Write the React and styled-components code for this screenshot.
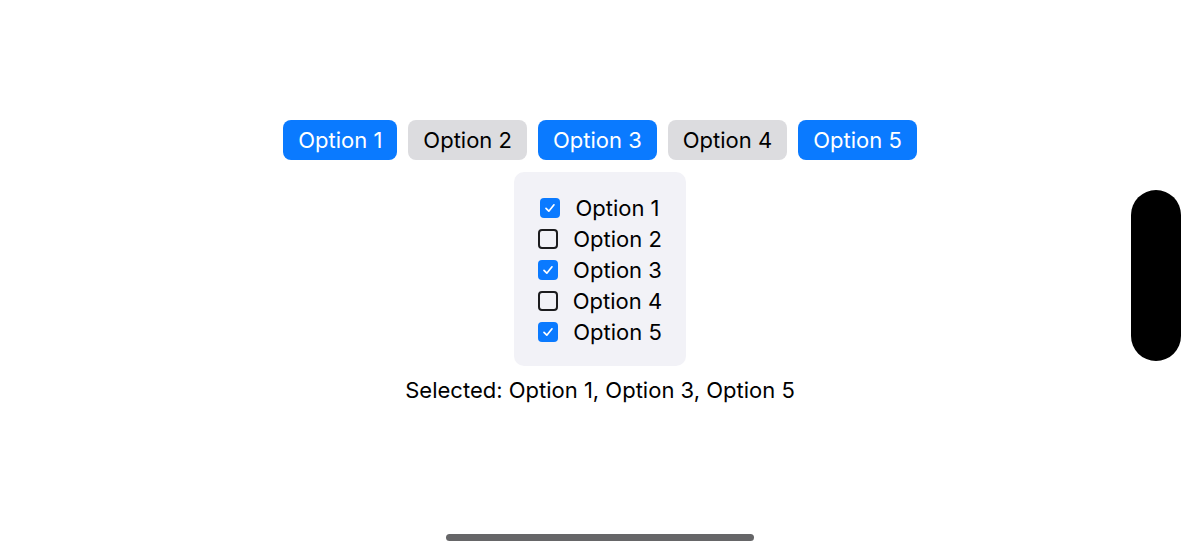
import React, { useState } from 'react';
import styled, { createGlobalStyle } from 'styled-components';

const GlobalStyle = createGlobalStyle`
    html, body {
        margin: 0;
        padding: 0;
        background: #ffffff;
        font-family: Inter, "Liberation Sans", sans-serif;
        -webkit-font-smoothing: antialiased;
    }
`;

const OPTIONS = ['Option 1', 'Option 2', 'Option 3', 'Option 4', 'Option 5'];

const App = () => {
    const [selected, setSelected] = useState(['Option 1', 'Option 3', 'Option 5']);

    const toggle = (opt) => {
        setSelected(prev =>
            prev.includes(opt)
                ? prev.filter(o => o !== opt)
                : OPTIONS.filter(o => o === opt || prev.includes(o))
        );
    };

    return (
        <StyledScreen>
            <GlobalStyle />
            <StyledContent>
                <StyledButtonRow>
                    {OPTIONS.map(opt => (
                        <StyledChip key={opt} active={selected.includes(opt)} onClick={() => toggle(opt)}>
                            {opt}
                        </StyledChip>
                    ))}
                </StyledButtonRow>

                <StyledPanel>
                    {OPTIONS.map(opt => {
                        const checked = selected.includes(opt);
                        return (
                            <StyledCheckRow key={opt} onClick={() => toggle(opt)}>
                                <StyledBox checked={checked}>
                                    {checked && (
                                        <svg width="14" height="14" viewBox="0 0 14 14">
                                            <path d="M3 7.4 L5.8 10.2 L11 3.8" fill="none" stroke="#fff" strokeWidth="1.7" strokeLinecap="round" strokeLinejoin="round" />
                                        </svg>
                                    )}
                                </StyledBox>
                                <StyledLabel>{opt}</StyledLabel>
                            </StyledCheckRow>
                        );
                    })}
                </StyledPanel>

                <StyledSummary>Selected: {selected.join(', ')}</StyledSummary>
            </StyledContent>

            <StyledSideButton />
            <StyledHomeBar />
        </StyledScreen>
    );
};

export default App;

const StyledScreen = styled.div`
    position: relative;
    width: 1200px;
    height: 552px;
    overflow: hidden;
    background: #ffffff;
`;

const StyledContent = styled.div`
    display: flex;
    flex-direction: column;
    align-items: center;
    padding-top: 120px;
`;

const StyledButtonRow = styled.div`
    display: flex;
    gap: 11px;
`;

const StyledChip = styled.button`
    height: 40px;
    padding: 0 15px;
    border: none;
    border-radius: 8px;
    font-family: inherit;
    font-size: 22px;
    cursor: pointer;
    background-color: ${props => props.active ? '#0a7aff' : '#dcdcdf'};
    color: ${props => props.active ? '#ffffff' : '#000000'};
`;

const StyledPanel = styled.div`
    margin-top: 12px;
    width: 172px;
    box-sizing: border-box;
    padding: 21px 0 19px;
    background-color: #f2f2f7;
    border-radius: 10px;
    display: flex;
    flex-direction: column;
    align-items: center;
`;

const StyledCheckRow = styled.div`
    display: flex;
    align-items: center;
    gap: 15px;
    height: 30.8px;
    cursor: pointer;
`;

const StyledBox = styled.div`
    width: 20px;
    height: 20px;
    box-sizing: border-box;
    border-radius: 4px;
    display: flex;
    align-items: center;
    justify-content: center;
    background-color: ${props => props.checked ? '#0a7aff' : 'transparent'};
    border: ${props => props.checked ? 'none' : '2px solid #1c1c1e'};
`;

const StyledLabel = styled.span`
    font-size: 22px;
    color: #000;
`;

const StyledSummary = styled.div`
    margin-top: 11px;
    font-size: 22px;
    line-height: 26px;
    color: #000;
`;

const StyledSideButton = styled.div`
    position: absolute;
    left: 1131px;
    top: 190px;
    width: 50px;
    height: 171px;
    border-radius: 25px;
    background: #000;
`;

const StyledHomeBar = styled.div`
    position: absolute;
    left: 446px;
    top: 534px;
    width: 308px;
    height: 7px;
    border-radius: 4px;
    background: #666668;
`;
